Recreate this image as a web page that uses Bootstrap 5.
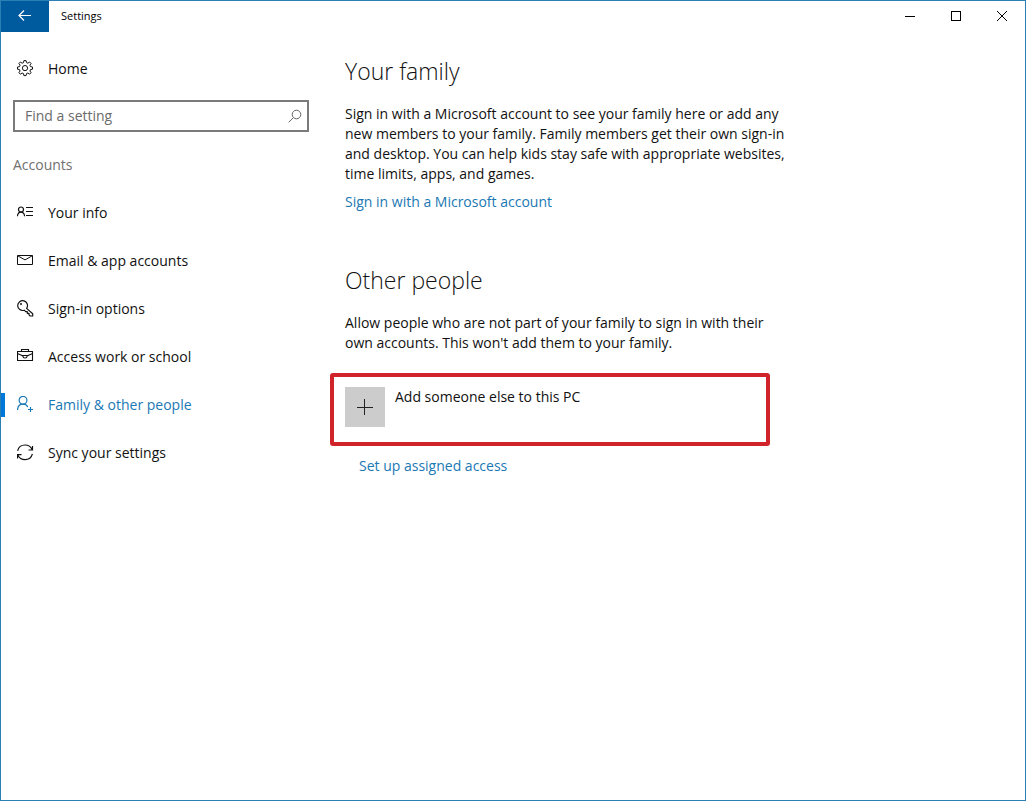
<!DOCTYPE html>
<html lang="en">
<head>
<meta charset="utf-8">
<meta name="viewport" content="width=device-width, initial-scale=1">
<title>Settings</title>
<link href="https://cdn.jsdelivr.net/npm/bootstrap@5.3.0/dist/css/bootstrap.min.css" rel="stylesheet">
<style>
:root { --accent: #0078d7; --link: #1a78b4; }
body { font-family: "Open Sans", "Noto Sans", sans-serif; font-size: 14px; line-height: 20px; color: #111; background: #fff; }
.app-window { border: 1px solid #2b7fb5; }
.title-bar { height: 31px; }
.title-text { font-size: 11px; line-height: 16px; color: #000; padding: 0 0 2px 12px; }
.back-btn { width: 48px; background: #005a9e; color: #fff; }
.caption-btn { width: 46px; height: 30px; color: #000; }
.plain-btn { border: 0; padding: 0; display: flex; align-items: center; justify-content: center; }
.plain-btn:not(.back-btn):not(.plus-tile) { background: transparent; }
svg { display: block; fill: none; stroke: currentColor; }
.side-pane { width: 308px; padding-top: 13px; }
.side-link { height: 48px; padding: 0 0 0 16px; gap: 13px; color: #111; text-decoration: none; position: relative; }
.side-link svg { width: 18px; height: 18px; flex: none; }
.side-link.active { color: var(--link); }
.side-link.active::before { content: ""; position: absolute; left: 0; top: 12px; width: 4px; height: 24px; background: var(--accent); }
.search-box { height: 32px; border: 2px solid #7a7a7a; margin: 7px 0 0 12px; }
.search-box input { border: 0; border-radius: 0; padding: 0 10px; font-size: 14px; line-height: 20px; min-height: 0; background: transparent; }
.search-box input::placeholder { color: #6b6b6b; }
.search-box input:focus { box-shadow: none; }
.search-btn { width: 26px; color: #666; }
.group-title { font-size: 14px; line-height: 24px; font-weight: 400; color: #707070; margin: 21px 0 12px 12px; }
.main-pane { padding: 23px 16px 24px 36px; }
.family-section { margin-bottom: 52px; }
.section-title { font-size: 23px; line-height: 32px; font-weight: 300; color: #111; margin: 0 0 17px; }
.text-block { max-width: 448px; }
.text-link { color: var(--link); text-decoration: none; }
.callout { max-width: 440px; height: 73px; border: 4px solid #d1232a; border-radius: 3px; padding: 10px 11px; gap: 10px; margin: 20px 0 10px -15px; }
.plus-tile { width: 40px; height: 40px; background: #ccc; color: #222; }
.assigned-link { margin-left: 14px; }
</style>
</head>
<body>
<div class="app-window min-vh-100 d-flex flex-column">
  <header class="title-bar d-flex align-items-stretch">
    <button type="button" class="plain-btn back-btn" aria-label="Back">
      <svg width="14" height="13" viewBox="0 0 14 13" stroke-width="1.200"><path d="M1 5.500h12M6 .5l-5 5 5 5"/></svg>
    </button>
    <span class="title-text align-self-center">Settings</span>
    <div class="d-flex ms-auto">
      <button type="button" class="plain-btn caption-btn" aria-label="Minimize"><svg width="10" height="10" shape-rendering="crispEdges"><path d="M0 5.500h10"/></svg></button>
      <button type="button" class="plain-btn caption-btn" aria-label="Maximize"><svg width="10" height="10" shape-rendering="crispEdges"><path d="M.5.5h9v9h-9z"/></svg></button>
      <button type="button" class="plain-btn caption-btn" aria-label="Close"><svg width="10" height="10"><path d="M0 0l10 10M10 0L0 10"/></svg></button>
    </div>
  </header>

  <div class="d-flex flex-grow-1">
    <aside class="side-pane flex-shrink-0">
      <a href="#" class="side-link d-flex align-items-center">
        <svg viewBox="0 0 18 18"><path d="M6.900.6h2.200l.4 2 1.400.6 1.700-1.200 1.500 1.500-1.200 1.700.6 1.400 2 .4v2.200l-2 .4-.6 1.400 1.200 1.700-1.500 1.500-1.700-1.200-1.400.6-.4 2H6.900l-.4-2-1.400-.6-1.700 1.200-1.500-1.500L3.100 11l-.6-1.400-2-.4V7l2-.4.6-1.400-1.200-1.700L3.400 2l1.700 1.200 1.400-.6z" stroke-linejoin="round"/><circle cx="8" cy="8.100" r="2.600"/></svg>
        <span>Home</span>
      </a>
      <form class="search-box d-flex" role="search">
        <input type="text" class="form-control" placeholder="Find a setting" aria-label="Find a setting">
        <button type="button" class="plain-btn search-btn" aria-label="Search"><svg width="14" height="14"><circle cx="8.500" cy="5.500" r="4.300"/><path d="M5.500 8.600L.7 13.300"/></svg></button>
      </form>
      <h1 class="group-title">Accounts</h1>
      <nav>
        <a href="#" class="side-link d-flex align-items-center">
          <svg viewBox="0 0 18 18" stroke-width="1.200"><circle cx="4" cy="5.500" r="2.500"/><path d="M.4 12.300c.2-2.600 1.500-4.200 3.600-4.200s3.400 1.600 3.600 4.200"/><path d="M9 3.500h7M9 7.500h7M9 11.500h7" stroke-width="1"/></svg>
          <span>Your info</span>
        </a>
        <a href="#" class="side-link d-flex align-items-center">
          <svg viewBox="0 0 18 18"><path d="M.5 3.500h15v9H.5z"/><path d="M.7 3.800L8 7.900l7.300-4.100"/></svg>
          <span>Email &amp; app accounts</span>
        </a>
        <a href="#" class="side-link d-flex align-items-center">
          <svg viewBox="0 0 18 18" stroke-width="1.200"><path d="M9.600 8.400a4.900 4.900 0 1 0-2.400 1.800l1.500 1.500h1.600v1.600h1.700v1.500l1.200 1.200h2.500v-2.200z" stroke-linejoin="round"/><circle cx="4" cy="4" r="1" fill="currentColor" stroke="none"/></svg>
          <span>Sign-in options</span>
        </a>
        <a href="#" class="side-link d-flex align-items-center">
          <svg viewBox="0 0 18 18" stroke-width="1.100"><path d="M.5 3.500h15v9H.5zM4.500 3.500v-2h7v2M.5 5.500l5.500 2.500M15.500 5.500L10 8M6 7.500v1a2 1.500 0 0 0 4 0v-1z"/></svg>
          <span>Access work or school</span>
        </a>
        <a href="#" class="side-link d-flex align-items-center active" aria-current="page">
          <svg viewBox="0 0 18 18" stroke-width="1.200"><circle cx="6" cy="4.300" r="3.900"/><path d="M.5 14c.2-3.500 2.300-5.800 5.500-5.800 2.300 0 3.900 1.100 4.800 2.800"/><path d="M13.500 11v5M11 13.500h5"/></svg>
          <span>Family &amp; other people</span>
        </a>
        <a href="#" class="side-link d-flex align-items-center">
          <svg viewBox="0 0 18 18" stroke-width="1.200"><path d="M.6 6.800C1.500 3.300 4.500 1 8 1c3.100 0 5.900 1.800 7.200 4.700M15.400 9.800C14.500 13.300 11.500 15.600 8 15.600c-3.100 0-5.900-1.800-7.200-4.700M15.500 2v4h-4M.5 14.600v-4h4"/></svg>
          <span>Sync your settings</span>
        </a>
      </nav>
    </aside>

    <main class="main-pane flex-grow-1">
      <section class="family-section">
        <h2 class="section-title">Your family</h2>
        <p class="text-block mb-2">Sign in with a Microsoft account to see your family here or add any new members to your family. Family members get their own sign-in and desktop. You can help kids stay safe with appropriate websites, time limits, apps, and games.</p>
        <a href="#" class="text-link d-inline-block">Sign in with a Microsoft account</a>
      </section>
      <section>
        <h2 class="section-title">Other people</h2>
        <p class="text-block mb-0">Allow people who are not part of your family to sign in with their own accounts. This won't add them to your family.</p>
        <div class="callout d-flex align-items-start">
          <button type="button" class="plain-btn plus-tile" aria-labelledby="add-label"><svg width="16" height="16" shape-rendering="crispEdges"><path d="M7.500 0v16M0 8.500h16"/></svg></button>
          <span id="add-label">Add someone else to this PC</span>
        </div>
        <a href="#" class="text-link assigned-link d-inline-block">Set up assigned access</a>
      </section>
    </main>
  </div>
</div>
<script src="https://cdn.jsdelivr.net/npm/bootstrap@5.3.0/dist/js/bootstrap.bundle.min.js"></script>
</body>
</html>
